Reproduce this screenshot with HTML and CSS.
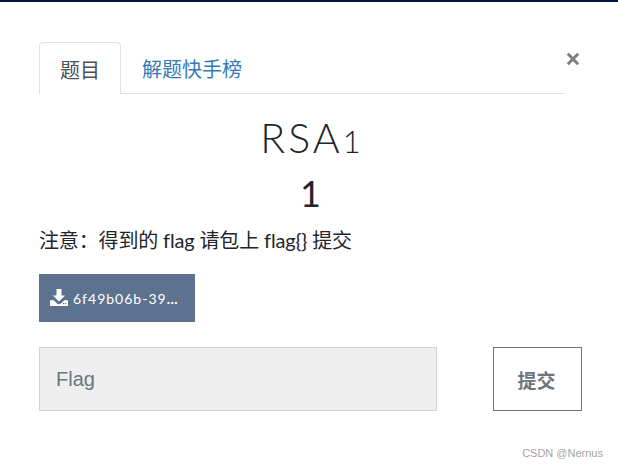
FILE: index.html
```html
<!DOCTYPE html>
<html lang="zh">
<head>
<meta charset="utf-8">
<title>RSA1</title>
<link rel="stylesheet" href="styles.css">
</head>
<body>
<div class="topbar"></div>
<main class="modal">
  <div class="tabrow">
    <ul class="tabs">
      <li class="tab active">题目</li>
      <li class="tab link">解题快手榜</li>
    </ul>
    <button class="close" aria-label="关闭">
      <svg viewBox="0 0 14 14" width="14" height="14"><path d="M1.8 1.8 12.2 12.2M12.2 1.8 1.8 12.2" fill="none" stroke="#7f7f7f" stroke-width="3"/></svg>
    </button>
  </div>
  <h1 class="title">RSA<span class="oldstyle">1</span></h1>
  <div class="score">1</div>
  <p class="note">注意：得到的 flag 请包上 flag{} 提交</p>
  <a class="download">
    <svg class="dl-icon" viewBox="0 0 18 17" width="18" height="17"><path d="M6.5 0h5v6.5h3.6L9 12.4 2.9 6.5h3.6zM0 11.2h3.7L7 14.4c1.2 1 2.8 1 4 0l3.3-3.2H18V17H0z" fill="#fff"/><rect x="13" y="14" width="1.2" height="1.2" fill="#5c728f"/><rect x="15" y="14" width="1.2" height="1.2" fill="#5c728f"/></svg>
    <span>6f49b06b-39<b class="dots">...</b></span>
  </a>
  <form class="flagform">
    <input class="flag" type="text" placeholder="Flag">
    <button class="submit" type="button">提交</button>
  </form>
</main>
<footer class="mark">CSDN @Nernus</footer>
</body>
</html>
```
FILE: styles.css
```css
* { box-sizing: border-box; }
html, body { margin: 0; height: 100%; }
body {
  position: relative;
  width: 618px;
  height: 468px;
  overflow: hidden;
  background: #fff;
  color: #212529;
  font-family: Lato, "Noto Sans CJK SC", sans-serif;
}
.topbar { height: 2px; background: #001540; }
.modal { padding: 40px 36px 0 39px; }
.tabrow { display: flex; align-items: flex-start; }
.tabs {
  display: flex;
  flex: none;
  width: 526px;
  height: 52px;
  margin: 0;
  padding: 0;
  list-style: none;
  border-bottom: 1px solid #dee2e6;
}
.tab {
  height: 52px;
  padding: 0 21px;
  font-size: 20px;
  line-height: 54px;
}
.tab.active {
  width: 82px;
  color: #495057;
  background: #fff;
  border: 1px solid #dee2e6;
  border-bottom: 0;
  border-radius: 4px 4px 0 0;
  padding: 0;
  text-align: center;
}
.tab.link { color: #337ab7; }
.close {
  flex: none;
  width: 14px;
  height: 14px;
  margin: 10px 0 0 1px;
  padding: 0;
  border: 0;
  background: none;
  line-height: 0;
}
.title {
  margin: 20px 0 0;
  font-size: 41px;
  font-weight: 300;
  line-height: 48px;
  letter-spacing: 3px;
  text-align: center;
}
.oldstyle { font-size: 31px; font-weight: 300; letter-spacing: 0; }
.score {
  margin-top: 7px;
  font-size: 36px;
  font-weight: 400;
  line-height: 43px;
  text-align: center;
}
.note {
  margin: 10px 0 0;
  font-size: 20px;
  line-height: 30px;
  letter-spacing: -0.15px;
}
.download {
  display: flex;
  align-items: center;
  width: 156px;
  height: 48px;
  margin-top: 19px;
  padding-left: 11px;
  background: #5c728f;
  color: #fff;
  font-size: 14px;
  letter-spacing: 1px;
}
.dl-icon { flex: none; margin-right: 5px; margin-top: -2px; }
.dots { font-weight: 900; letter-spacing: 0.5px; }
.flagform {
  display: flex;
  justify-content: space-between;
  margin-top: 25px;
}
.flag {
  width: 398px;
  height: 64px;
  padding: 0 16px;
  background: #eee;
  border: 1px solid #ced4da;
  font-family: "Liberation Sans", sans-serif;
  font-size: 20px;
  border-radius: 0;
  outline: 0;
}
.flag::placeholder { color: #6c757d; opacity: 1; }
.submit {
  width: 89px;
  height: 64px;
  padding: 0 2px 0 0;
  background: #fff;
  border: 1px solid #6c757d;
  color: #6c757d;
  font-family: Lato, "Noto Sans CJK SC", sans-serif;
  font-size: 19px;
  font-weight: 700;
}
.mark {
  position: absolute;
  right: 15px;
  top: 447px;
  font-family: "Liberation Sans", sans-serif;
  font-size: 11px;
  line-height: 13px;
  color: #a3a3a3;
}
```
